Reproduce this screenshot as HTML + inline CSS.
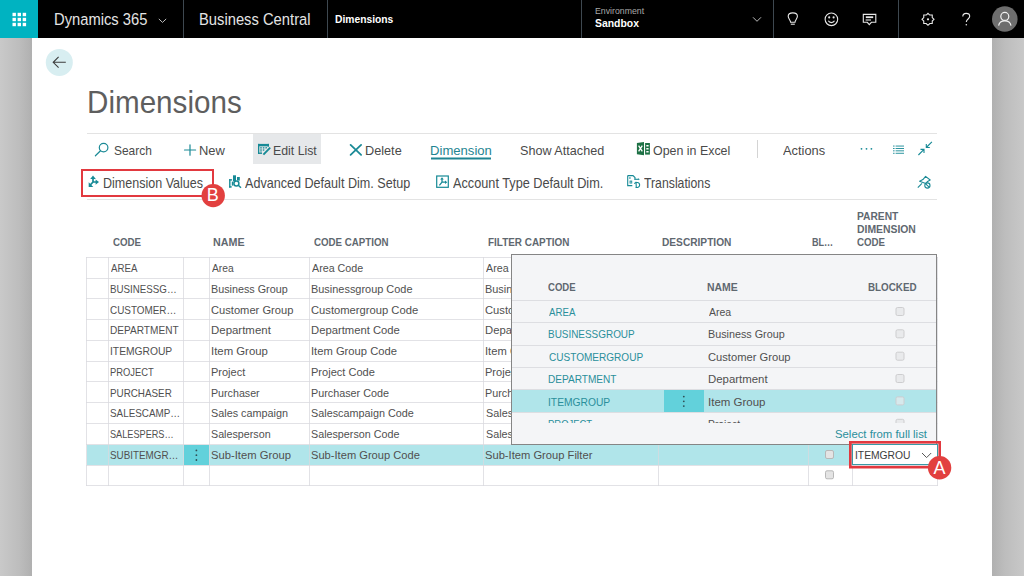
<!DOCTYPE html>
<html><head><meta charset="utf-8">
<style>
*{margin:0;padding:0;box-sizing:border-box}
html,body{width:1024px;height:576px;overflow:hidden;background:#fff;font-family:"Liberation Sans",sans-serif;color:#333}
.abs{position:absolute}
.t{position:absolute;white-space:nowrap;transform-origin:0 0}
svg{position:absolute;overflow:visible}
</style></head>
<body>
<!-- side strips -->
<div class="abs" style="left:0;top:38px;width:32px;height:538px;background:linear-gradient(90deg,#c9c9c9 0%,#bdbdbd 60%,#b0b0b0 100%)"></div>
<div class="abs" style="left:992px;top:38px;width:32px;height:538px;background:linear-gradient(90deg,#b0b0b0 0%,#bdbdbd 40%,#c8c8c8 100%)"></div>

<!-- top bar -->
<div class="abs" style="left:0;top:0;width:1024px;height:38px;background:#000"></div>
<div class="abs" style="left:0;top:0;width:38px;height:38px;background:#00b3c1"></div>
<svg style="left:0;top:0" width="1024" height="38" viewBox="0 0 1024 38">
  <g fill="#fff">
    <rect x="12.5" y="12.8" width="3.4" height="3.4"/><rect x="17.6" y="12.8" width="3.4" height="3.4"/><rect x="22.7" y="12.8" width="3.4" height="3.4"/>
    <rect x="12.5" y="17.8" width="3.4" height="3.4"/><rect x="17.6" y="17.8" width="3.4" height="3.4"/><rect x="22.7" y="17.8" width="3.4" height="3.4"/>
    <rect x="12.5" y="22.8" width="3.4" height="3.4"/><rect x="17.6" y="22.8" width="3.4" height="3.4"/><rect x="22.7" y="22.8" width="3.4" height="3.4"/>
  </g>
  <g stroke="#bdbdbd" stroke-width="1" fill="none">
    <path d="M158.8 18.9 L162.5 22.4 L166.2 18.9"/>
    <path d="M753 17.3 L757 21.3 L761 17.3"/>
  </g>
  <g fill="#3e4850">
    <rect x="183" y="0" width="1" height="38"/>
    <rect x="327" y="0" width="1" height="38"/>
    <rect x="581" y="0" width="1" height="38"/>
    <rect x="773" y="0" width="1" height="38"/>
    <rect x="898" y="0" width="1" height="38"/>
  </g>
  <g stroke="#e8e8e8" stroke-width="1.1" fill="none">
    <!-- bulb -->
    <path d="M790.6 22.3 C790.6 20 788.2 18.8 788.2 16.3 C788.2 14.2 790.2 12.9 792.8 12.9 C795.4 12.9 797.4 14.2 797.4 16.3 C797.4 18.8 795 20 795 22.3 Z"/>
    <path d="M790.8 24.2 L794.8 24.2"/>
    <!-- smiley -->
    <circle cx="831.4" cy="19.3" r="6.3"/>
    <path d="M828.3 20.8 C829.5 23.2 833.3 23.2 834.5 20.8"/>
    <circle cx="829.2" cy="17.4" r="0.5"/><circle cx="833.6" cy="17.4" r="0.5"/>
    <!-- chat -->
    <path d="M863.3 14.4 L875.8 14.4 L875.8 22.3 L871.4 22.3 L869.3 24.6 L867.3 22.3 L863.3 22.3 Z"/>
    <path d="M865.8 17.2 L873.2 17.2" stroke-width="1.8"/><path d="M865.6 20 L871 20"/>
    <!-- gear -->
    <path d="M928.00 13.30 L929.76 15.05 L932.24 15.06 L932.25 17.54 L934.00 19.30 L932.25 21.06 L932.24 23.54 L929.76 23.55 L928.00 25.30 L926.24 23.55 L923.76 23.54 L923.75 21.06 L922.00 19.30 L923.75 17.54 L923.76 15.06 L926.24 15.05 Z"/>
    <!-- help -->
    <path d="M962.8 16.5 C962.8 14.5 964.2 13.4 966.2 13.4 C968.2 13.4 969.7 14.5 969.7 16.3 C969.7 18.8 966.3 19.2 966.3 22"/>
  </g>
  <circle cx="966.3" cy="24.8" r="0.8" fill="#e8e8e8"/><circle cx="928" cy="19.3" r="1.1" fill="#e8e8e8"/>
  <circle cx="1004.8" cy="19" r="12.8" fill="#6e6e6e"/>
  <g stroke="#f2f2f2" stroke-width="1.2" fill="none">
    <circle cx="1004.8" cy="16.4" r="4"/>
    <path d="M998.6 25.6 C999.2 22.6 1001.6 20.9 1004.8 20.9 C1008 20.9 1010.4 22.6 1011 25.6"/>
  </g>
</svg>
<div class="t" style="left:54.12px;top:12.35px;font-size:15.82px;line-height:15.82px;color:#e4e4e4;font-weight:normal;transform:scaleX(0.9326);">Dynamics 365</div>
<div class="t" style="left:199.32px;top:12.35px;font-size:15.82px;line-height:15.82px;color:#e4e4e4;font-weight:normal;transform:scaleX(0.9331);">Business Central</div>
<div class="t" style="left:335.33px;top:13.40px;font-size:11.76px;line-height:11.76px;color:#fff;font-weight:bold;transform:scaleX(0.8750);">Dimensions</div>
<div class="t" style="left:594.90px;top:6.73px;font-size:8.43px;line-height:8.43px;color:#a8a8a8;font-weight:normal;transform:scaleX(1.0380);">Environment</div>
<div class="t" style="left:594.74px;top:18.27px;font-size:11.33px;line-height:11.33px;color:#fff;font-weight:bold;transform:scaleX(0.9182);">Sandbox</div>

<!-- base page svg -->
<svg style="left:0;top:0" width="1024" height="576" viewBox="0 0 1024 576">
  <circle cx="59.3" cy="62.4" r="13.5" fill="#d8eef1"/>
  <g stroke="#3c3c3c" stroke-width="1.1" fill="none">
    <path d="M53.2 62.3 L65.8 62.3 M58.6 56.9 L53.2 62.3 L58.6 67.7"/>
  </g>
  <!-- toolbar lines -->
  <rect x="87" y="133" width="850" height="1" fill="#e3e3e3"/>
  <rect x="87" y="199" width="850" height="1" fill="#e3e3e3"/>
  <rect x="253" y="134" width="68" height="30" fill="#e6e8ea"/>
  <rect x="431" y="157.5" width="60" height="2" fill="#1f8592"/>
  <rect x="757" y="140" width="1" height="18" fill="#d4d4d4"/>
  <!-- toolbar icons -->
  <g stroke="#1b8a96" stroke-width="1.2" fill="none" stroke-linecap="round">
    <circle cx="103.6" cy="147.6" r="4.3"/>
    <path d="M100.5 150.8 L95.4 155.8"/>
    <path d="M190 144.8 L190 155.2 M184.5 150 L195.6 150"/>
    <path d="M350.6 144.9 L361.1 154.8 M361.1 144.9 L350.6 154.8" stroke-width="1.8"/>
  </g>
  <!-- edit list icon -->
  <g fill="#178a96">
    <rect x="258" y="143.9" width="11" height="2.4"/>
    <rect x="258" y="143.9" width="1.3" height="10"/>
    <rect x="258" y="152.6" width="4" height="1.3"/>
    <rect x="267.7" y="143.9" width="1.3" height="3"/>
    <rect x="260.2" y="147.2" width="1.6" height="1.3"/><rect x="262.8" y="147.2" width="1.6" height="1.3"/><rect x="265.4" y="147.2" width="1.6" height="1.3"/>
    <rect x="260.2" y="149.4" width="1.6" height="1.3"/><rect x="262.8" y="149.4" width="1.6" height="1.3"/>
    <rect x="260.2" y="151.5" width="1.6" height="0.9"/>
  </g>
  <path d="M263.2 154.3 L269.8 147.7" stroke="#e6e8ea" stroke-width="3.2"/>
  <path d="M263.4 154.6 L270.2 147.6" stroke="#178a96" stroke-width="1.9"/>
  <!-- excel -->
  <path d="M636.9 143 L644 142 L644 155.2 L636.9 154.2 Z" fill="#1e7145"/>
  <rect x="645.1" y="143" width="4.8" height="11.6" fill="#1e7145"/>
  <path d="M638.6 145.6 L642.3 151.4 M642.3 145.6 L638.6 151.4" stroke="#fff" stroke-width="1.3"/>
  <g fill="#fff"><rect x="646.3" y="145" width="2.3" height="1.5"/><rect x="646.3" y="148" width="2.3" height="1.5"/><rect x="646.3" y="151" width="2.3" height="1.5"/></g>
  <!-- dots list collapse -->
  <g fill="#178a96"><circle cx="861.5" cy="148.8" r="0.9"/><circle cx="866.5" cy="148.8" r="0.9"/><circle cx="871.4" cy="148.8" r="0.9"/></g>
  <g fill="#178a96">
    <rect x="895.6" y="145.6" width="8.4" height="0.9"/><rect x="895.6" y="148" width="8.4" height="0.9"/><rect x="895.6" y="150.4" width="8.4" height="0.9"/><rect x="895.6" y="152.8" width="8.4" height="0.9"/>
    <rect x="893" y="145.6" width="1.6" height="0.9"/><rect x="893" y="148" width="1.6" height="0.9"/><rect x="893" y="150.4" width="1.6" height="0.9"/><rect x="893" y="152.8" width="1.6" height="0.9"/>
  </g>
  <g stroke="#178a96" stroke-width="1.1" fill="none">
    <path d="M918.4 155 L924 149.4 M920.5 149.4 L924 149.4 L924 152.9"/>
    <path d="M931.9 141.9 L926.3 147.5 M926.3 144 L926.3 147.5 L929.8 147.5"/>
  </g>
  <!-- row 2 icons -->
  <g stroke="#178a96" stroke-width="1.7" fill="none">
    <path d="M93 182 L93 177.5 M93 182 L96.8 182 M93 182 L89.8 185.5"/>
  </g>
  <g fill="#178a96">
    <path d="M90.2 178.9 L93 175.6 L95.8 178.9 Z"/>
    <path d="M95.6 179.6 L99 182 L95.6 184.7 Z"/>
    <path d="M88.7 182.2 L88.7 186.9 L93.3 186.9 Z"/>
  </g>
  <!-- advanced -->
  <g fill="#178a96">
    <rect x="233" y="175.3" width="3" height="6"/>
    <rect x="237" y="177" width="2.8" height="3.6"/>
    <rect x="229.1" y="179.2" width="3" height="1.4"/>
    <rect x="229.1" y="179.2" width="1.4" height="8.4"/>
    <rect x="229.1" y="186.2" width="2.6" height="1.4"/>
    <rect x="231.8" y="181.6" width="1.5" height="4"/>
  </g>
  <circle cx="236.4" cy="183.4" r="2.5" fill="#fff" stroke="#178a96" stroke-width="1.5"/>
  <path d="M238.3 185.3 L241 187.8" stroke="#178a96" stroke-width="1.5"/>
  <!-- account type -->
  <rect x="436.7" y="176" width="11.6" height="11.3" fill="none" stroke="#178a96" stroke-width="1.2"/>
  <g stroke="#178a96" stroke-width="1.3" fill="none"><path d="M439.4 185.3 L442 182.2 L446 182.2 M442 182.2 L442 179"/></g>
  <g fill="#178a96"><path d="M440.2 179.6 L442 177.3 L443.8 179.6 Z"/><path d="M445 180.5 L447.3 182.2 L445 183.9 Z"/></g>
  <!-- translations -->
  <g stroke="#178a96" stroke-width="1.1" fill="none">
    <path d="M627.7 175.6 L633 175.6 L635 177.6 L635 179 M627.7 175.6 L627.7 185.6 L632.3 185.6"/>
    <path d="M634.2 179.3 L638.6 179.3"/>
    <path d="M634.3 183.6 C636 181.6 640 182.3 639.6 185.3 C639.3 187.2 637.3 187.7 635.6 187.4"/>
    <path d="M636 181.8 L636.3 187.5"/>
  </g>
  <g fill="#178a96">
    <rect x="629.2" y="177.3" width="1.4" height="1.4"/>
    <rect x="629.6" y="180.6" width="2.6" height="2.9"/>
    <path d="M638.2 178.3 L639.8 179.3 L638.2 180.3 Z"/>
  </g>
  <rect x="630.4" y="181.6" width="1" height="1" fill="#fff"/>
  <!-- pin -->
  <g stroke="#1b8a96" stroke-width="1.1" fill="none" stroke-linejoin="round">
    <path d="M925.6 176.4 L930.2 180 L927.6 181.4 L925.8 183.6 L919.6 181.2 L922.9 179.6 Z"/>
    <path d="M922 183.3 L917.8 187.6"/>
    <circle cx="927.4" cy="185.5" r="2.6" fill="#fff"/>
    <path d="M925.7 183.8 L929.1 187.2"/>
  </g>

  <!-- grid -->
  <rect x="87" y="445" width="850" height="20" fill="#b0e5ea"/>
  <rect x="184" y="445" width="25" height="20" fill="#62d1db"/>
  <g fill="#d8d8de" fill-opacity="0.75">
    <rect x="86" y="257" width="852" height="1"/>
    <rect x="86" y="278" width="852" height="1"/>
    <rect x="86" y="298" width="852" height="1"/>
    <rect x="86" y="319" width="852" height="1"/>
    <rect x="86" y="340" width="852" height="1"/>
    <rect x="86" y="361" width="852" height="1"/>
    <rect x="86" y="381" width="852" height="1"/>
    <rect x="86" y="402" width="852" height="1"/>
    <rect x="86" y="423" width="852" height="1"/>
    <rect x="86" y="444" width="852" height="1"/>
    <rect x="86" y="465" width="852" height="1"/>
    <rect x="86" y="485" width="852" height="1"/>
    <rect x="86" y="257" width="1" height="229"/>
    <rect x="108" y="257" width="1" height="229"/>
    <rect x="183" y="257" width="1" height="229"/>
    <rect x="209" y="257" width="1" height="229"/>
    <rect x="309" y="257" width="1" height="229"/>
    <rect x="483" y="257" width="1" height="229"/>
    <rect x="658" y="257" width="1" height="229"/>
    <rect x="808" y="257" width="1" height="229"/>
    <rect x="852" y="257" width="1" height="229"/>
    <rect x="937" y="257" width="1" height="229"/>
  </g>
  <g fill="#2f4f55"><circle cx="196.4" cy="450.4" r="0.9"/><circle cx="196.4" cy="455.2" r="0.9"/><circle cx="196.4" cy="460" r="0.9"/></g>
  <g fill="#e4e4e4" stroke="#b8b8b8" stroke-width="1">
    <rect x="825.5" y="450.5" width="8" height="8" rx="1.5"/>
    <rect x="825.5" y="470.8" width="8" height="8" rx="1.5"/>
  </g>
</svg>
<div class="t" style="left:86.73px;top:85.53px;font-size:32.20px;line-height:32.20px;color:#5e5e5e;font-weight:normal;transform:scaleX(0.9203);">Dimensions</div>
<div class="t" style="left:114.26px;top:144.56px;font-size:12.63px;line-height:12.63px;color:#4a4a4a;font-weight:normal;transform:scaleX(0.9461);">Search</div>
<div class="t" style="left:199.46px;top:144.56px;font-size:12.63px;line-height:12.63px;color:#4a4a4a;font-weight:normal;transform:scaleX(1.0248);">New</div>
<div class="t" style="left:273.21px;top:144.56px;font-size:12.63px;line-height:12.63px;color:#4a4a4a;font-weight:normal;transform:scaleX(0.9751);">Edit List</div>
<div class="t" style="left:364.98px;top:144.56px;font-size:12.63px;line-height:12.63px;color:#4a4a4a;font-weight:normal;transform:scaleX(1.0061);">Delete</div>
<div class="t" style="left:429.95px;top:144.56px;font-size:12.63px;line-height:12.63px;color:#1f8592;font-weight:normal;transform:scaleX(1.0380);">Dimension</div>
<div class="t" style="left:519.83px;top:144.56px;font-size:12.63px;line-height:12.63px;color:#4a4a4a;font-weight:normal;transform:scaleX(0.9995);">Show Attached</div>
<div class="t" style="left:652.84px;top:144.56px;font-size:12.63px;line-height:12.63px;color:#4a4a4a;font-weight:normal;transform:scaleX(0.9832);">Open in Excel</div>
<div class="t" style="left:783.00px;top:144.56px;font-size:12.63px;line-height:12.63px;color:#4a4a4a;font-weight:normal;transform:scaleX(1.0174);">Actions</div>
<div class="t" style="left:103.00px;top:176.58px;font-size:13.79px;line-height:13.79px;color:#4a4a4a;font-weight:normal;transform:scaleX(0.9092);">Dimension Values</div>
<div class="t" style="left:244.90px;top:176.58px;font-size:13.79px;line-height:13.79px;color:#4a4a4a;font-weight:normal;transform:scaleX(0.9137);">Advanced Default Dim. Setup</div>
<div class="t" style="left:452.50px;top:176.58px;font-size:13.79px;line-height:13.79px;color:#4a4a4a;font-weight:normal;transform:scaleX(0.9224);">Account Type Default Dim.</div>
<div class="t" style="left:643.75px;top:176.58px;font-size:13.79px;line-height:13.79px;color:#4a4a4a;font-weight:normal;transform:scaleX(0.8896);">Translations</div>
<div class="t" style="left:112.91px;top:236.52px;font-size:11.04px;line-height:11.04px;color:#5f6870;font-weight:bold;transform:scaleX(0.8794);">CODE</div>
<div class="t" style="left:212.70px;top:236.52px;font-size:11.04px;line-height:11.04px;color:#5f6870;font-weight:bold;transform:scaleX(0.9720);">NAME</div>
<div class="t" style="left:313.51px;top:236.52px;font-size:11.04px;line-height:11.04px;color:#5f6870;font-weight:bold;transform:scaleX(0.8807);">CODE CAPTION</div>
<div class="t" style="left:487.85px;top:236.52px;font-size:11.04px;line-height:11.04px;color:#5f6870;font-weight:bold;transform:scaleX(0.9001);">FILTER CAPTION</div>
<div class="t" style="left:662.04px;top:236.52px;font-size:11.04px;line-height:11.04px;color:#5f6870;font-weight:bold;transform:scaleX(0.9205);">DESCRIPTION</div>
<div class="t" style="left:812.01px;top:236.52px;font-size:11.04px;line-height:11.04px;color:#5f6870;font-weight:bold;transform:scaleX(0.8228);">BL…</div>
<div class="t" style="left:856.73px;top:211.45px;font-size:11.47px;line-height:11.47px;color:#5f6870;font-weight:bold;transform:scaleX(0.8921);">PARENT</div>
<div class="t" style="left:856.72px;top:224.25px;font-size:11.47px;line-height:11.47px;color:#5f6870;font-weight:bold;transform:scaleX(0.9054);">DIMENSION</div>
<div class="t" style="left:857.01px;top:236.52px;font-size:11.04px;line-height:11.04px;color:#5f6870;font-weight:bold;transform:scaleX(0.8794);">CODE</div>
<div class="t" style="left:110.70px;top:262.04px;font-size:11.60px;line-height:11.60px;color:#505050;font-weight:normal;transform:scaleX(0.8348);">AREA</div>
<div class="t" style="left:211.60px;top:262.04px;font-size:11.60px;line-height:11.60px;color:#505050;font-weight:normal;transform:scaleX(0.8840);">Area</div>
<div class="t" style="left:311.60px;top:262.04px;font-size:11.60px;line-height:11.60px;color:#505050;font-weight:normal;transform:scaleX(0.9222);">Area Code</div>
<div class="t" style="left:109.92px;top:282.79px;font-size:11.60px;line-height:11.60px;color:#505050;font-weight:normal;transform:scaleX(0.8412);">BUSINESSG…</div>
<div class="t" style="left:210.74px;top:282.79px;font-size:11.60px;line-height:11.60px;color:#505050;font-weight:normal;transform:scaleX(0.9294);">Business Group</div>
<div class="t" style="left:310.73px;top:282.79px;font-size:11.60px;line-height:11.60px;color:#505050;font-weight:normal;transform:scaleX(0.9427);">Businessgroup Code</div>
<div class="t" style="left:110.20px;top:303.54px;font-size:11.60px;line-height:11.60px;color:#505050;font-weight:normal;transform:scaleX(0.8543);">CUSTOMER…</div>
<div class="t" style="left:211.04px;top:303.54px;font-size:11.60px;line-height:11.60px;color:#505050;font-weight:normal;transform:scaleX(0.9612);">Customer Group</div>
<div class="t" style="left:311.04px;top:303.54px;font-size:11.60px;line-height:11.60px;color:#505050;font-weight:normal;transform:scaleX(0.9668);">Customergroup Code</div>
<div class="t" style="left:109.89px;top:324.29px;font-size:11.60px;line-height:11.60px;color:#505050;font-weight:normal;transform:scaleX(0.8703);">DEPARTMENT</div>
<div class="t" style="left:210.68px;top:324.29px;font-size:11.60px;line-height:11.60px;color:#505050;font-weight:normal;transform:scaleX(0.9875);">Department</div>
<div class="t" style="left:310.70px;top:324.29px;font-size:11.60px;line-height:11.60px;color:#505050;font-weight:normal;transform:scaleX(0.9706);">Department Code</div>
<div class="t" style="left:109.77px;top:345.04px;font-size:11.60px;line-height:11.60px;color:#505050;font-weight:normal;transform:scaleX(0.8863);">ITEMGROUP</div>
<div class="t" style="left:210.58px;top:345.04px;font-size:11.60px;line-height:11.60px;color:#505050;font-weight:normal;transform:scaleX(0.9805);">Item Group</div>
<div class="t" style="left:310.59px;top:345.04px;font-size:11.60px;line-height:11.60px;color:#505050;font-weight:normal;transform:scaleX(0.9662);">Item Group Code</div>
<div class="t" style="left:109.95px;top:365.79px;font-size:11.60px;line-height:11.60px;color:#505050;font-weight:normal;transform:scaleX(0.8099);">PROJECT</div>
<div class="t" style="left:210.72px;top:365.79px;font-size:11.60px;line-height:11.60px;color:#505050;font-weight:normal;transform:scaleX(0.9476);">Project</div>
<div class="t" style="left:310.72px;top:365.79px;font-size:11.60px;line-height:11.60px;color:#505050;font-weight:normal;transform:scaleX(0.9520);">Project Code</div>
<div class="t" style="left:109.91px;top:386.54px;font-size:11.60px;line-height:11.60px;color:#505050;font-weight:normal;transform:scaleX(0.8485);">PURCHASER</div>
<div class="t" style="left:210.75px;top:386.54px;font-size:11.60px;line-height:11.60px;color:#505050;font-weight:normal;transform:scaleX(0.9210);">Purchaser</div>
<div class="t" style="left:310.74px;top:386.54px;font-size:11.60px;line-height:11.60px;color:#505050;font-weight:normal;transform:scaleX(0.9306);">Purchaser Code</div>
<div class="t" style="left:110.26px;top:407.29px;font-size:11.60px;line-height:11.60px;color:#505050;font-weight:normal;transform:scaleX(0.8505);">SALESCAMP…</div>
<div class="t" style="left:211.11px;top:407.29px;font-size:11.60px;line-height:11.60px;color:#505050;font-weight:normal;transform:scaleX(0.9335);">Sales campaign</div>
<div class="t" style="left:311.11px;top:407.29px;font-size:11.60px;line-height:11.60px;color:#505050;font-weight:normal;transform:scaleX(0.9326);">Salescampaign Code</div>
<div class="t" style="left:110.29px;top:428.04px;font-size:11.60px;line-height:11.60px;color:#505050;font-weight:normal;transform:scaleX(0.7898);">SALESPERS…</div>
<div class="t" style="left:211.12px;top:428.04px;font-size:11.60px;line-height:11.60px;color:#505050;font-weight:normal;transform:scaleX(0.9248);">Salesperson</div>
<div class="t" style="left:311.12px;top:428.04px;font-size:11.60px;line-height:11.60px;color:#505050;font-weight:normal;transform:scaleX(0.9265);">Salesperson Code</div>
<div class="t" style="left:110.26px;top:448.79px;font-size:11.60px;line-height:11.60px;color:#505050;font-weight:normal;transform:scaleX(0.8500);">SUBITEMGR…</div>
<div class="t" style="left:211.09px;top:448.79px;font-size:11.60px;line-height:11.60px;color:#505050;font-weight:normal;transform:scaleX(0.9690);">Sub-Item Group</div>
<div class="t" style="left:311.10px;top:448.79px;font-size:11.60px;line-height:11.60px;color:#505050;font-weight:normal;transform:scaleX(0.9602);">Sub-Item Group Code</div>
<div class="t" style="left:485.00px;top:448.79px;font-size:11.60px;line-height:11.60px;color:#505050;font-weight:normal;transform:scaleX(0.9634);">Sub-Item Group Filter</div>
<div class="abs" style="left:484px;top:258px;width:27px;height:186px;overflow:hidden">
  <div class="abs" style="left:-484px;top:-258px;width:1024px;height:576px"><div class="t" style="left:486.00px;top:262.04px;font-size:11.60px;line-height:11.60px;color:#505050;font-weight:normal;transform:scaleX(0.9222);">Area Filter</div>
<div class="t" style="left:485.13px;top:282.79px;font-size:11.60px;line-height:11.60px;color:#505050;font-weight:normal;transform:scaleX(0.9427);">Businessgroup Filter</div>
<div class="t" style="left:485.44px;top:303.54px;font-size:11.60px;line-height:11.60px;color:#505050;font-weight:normal;transform:scaleX(0.9668);">Customergroup Filter</div>
<div class="t" style="left:485.10px;top:324.29px;font-size:11.60px;line-height:11.60px;color:#505050;font-weight:normal;transform:scaleX(0.9706);">Department Filter</div>
<div class="t" style="left:484.99px;top:345.04px;font-size:11.60px;line-height:11.60px;color:#505050;font-weight:normal;transform:scaleX(0.9662);">Item Group Filter</div>
<div class="t" style="left:485.12px;top:365.79px;font-size:11.60px;line-height:11.60px;color:#505050;font-weight:normal;transform:scaleX(0.9520);">Project Filter</div>
<div class="t" style="left:485.14px;top:386.54px;font-size:11.60px;line-height:11.60px;color:#505050;font-weight:normal;transform:scaleX(0.9306);">Purchaser Filter</div>
<div class="t" style="left:485.51px;top:407.29px;font-size:11.60px;line-height:11.60px;color:#505050;font-weight:normal;transform:scaleX(0.9326);">Salescampaign Filter</div>
<div class="t" style="left:485.52px;top:428.04px;font-size:11.60px;line-height:11.60px;color:#505050;font-weight:normal;transform:scaleX(0.9265);">Salesperson Filter</div></div>
</div>

<!-- popup -->
<div class="abs" style="left:511px;top:254px;width:426px;height:191px;background:#f4f5f7;border:1px solid #858585;overflow:hidden">
  <div class="abs" style="left:-512px;top:-255px;width:1024px;height:576px">
    <svg style="left:0;top:0" width="1024" height="576" viewBox="0 0 1024 576">
      <g fill="#dddee2">
        <rect x="512" y="300" width="424" height="1"/>
        <rect x="512" y="322" width="424" height="1"/>
        <rect x="512" y="345" width="424" height="1"/>
        <rect x="512" y="367" width="424" height="1"/>
        <rect x="512" y="389" width="424" height="1"/>
        <rect x="512" y="412" width="424" height="1"/>
      </g>
      <rect x="512" y="390" width="424" height="22" fill="#b0e5ea"/>
      <rect x="664" y="390" width="40" height="22" fill="#62d1db"/>
      <g fill="#2f4f55"><circle cx="683.8" cy="396.6" r="0.9"/><circle cx="683.8" cy="401.3" r="0.9"/><circle cx="683.8" cy="406.1" r="0.9"/></g>
      <g fill="#e9eaec" stroke="#cdcdcf" stroke-width="1">
        <rect x="896" y="307.5" width="8" height="8" rx="1.5"/>
        <rect x="896" y="329.8" width="8" height="8" rx="1.5"/>
        <rect x="896" y="352.2" width="8" height="8" rx="1.5"/>
        <rect x="896" y="374.5" width="8" height="8" rx="1.5"/>
        <rect x="896" y="396.9" width="8" height="8" rx="1.5" fill="#d6e9ec"/>
      </g>
    </svg>
    <div class="t" style="left:548.22px;top:282.06px;font-size:10.75px;line-height:10.75px;color:#5f6870;font-weight:bold;transform:scaleX(0.8899);">CODE</div>
<div class="t" style="left:707.42px;top:282.06px;font-size:10.75px;line-height:10.75px;color:#5f6870;font-weight:bold;transform:scaleX(0.9721);">NAME</div>
<div class="t" style="left:867.96px;top:282.06px;font-size:10.75px;line-height:10.75px;color:#5f6870;font-weight:bold;transform:scaleX(0.9126);">BLOCKED</div>
<div class="t" style="left:549.00px;top:306.14px;font-size:11.60px;line-height:11.60px;color:#2a8f9b;font-weight:normal;transform:scaleX(0.8348);">AREA</div>
<div class="t" style="left:709.00px;top:306.14px;font-size:11.60px;line-height:11.60px;color:#505050;font-weight:normal;transform:scaleX(0.9064);">Area</div>
<div class="t" style="left:548.20px;top:328.49px;font-size:11.60px;line-height:11.60px;color:#2a8f9b;font-weight:normal;transform:scaleX(0.8568);">BUSINESSGROUP</div>
<div class="t" style="left:708.14px;top:328.49px;font-size:11.60px;line-height:11.60px;color:#505050;font-weight:normal;transform:scaleX(0.9294);">Business Group</div>
<div class="t" style="left:548.50px;top:350.84px;font-size:11.60px;line-height:11.60px;color:#2a8f9b;font-weight:normal;transform:scaleX(0.8659);">CUSTOMERGROUP</div>
<div class="t" style="left:708.44px;top:350.84px;font-size:11.60px;line-height:11.60px;color:#505050;font-weight:normal;transform:scaleX(0.9636);">Customer Group</div>
<div class="t" style="left:548.19px;top:373.19px;font-size:11.60px;line-height:11.60px;color:#2a8f9b;font-weight:normal;transform:scaleX(0.8690);">DEPARTMENT</div>
<div class="t" style="left:708.09px;top:373.19px;font-size:11.60px;line-height:11.60px;color:#505050;font-weight:normal;transform:scaleX(0.9842);">Department</div>
<div class="t" style="left:548.07px;top:395.54px;font-size:11.60px;line-height:11.60px;color:#2a8f9b;font-weight:normal;transform:scaleX(0.8863);">ITEMGROUP</div>
<div class="t" style="left:707.97px;top:395.54px;font-size:11.60px;line-height:11.60px;color:#505050;font-weight:normal;transform:scaleX(0.9911);">Item Group</div>
<div class="t" style="left:834.79px;top:429.36px;font-size:10.75px;line-height:10.75px;color:#2a8f9b;font-weight:normal;transform:scaleX(1.0542);">Select from full list</div>
    <div class="abs" style="left:512px;top:413px;width:424px;height:10px;overflow:hidden">
      <div class="abs" style="left:-512px;top:-413px;width:1024px;height:576px">
        <svg style="left:0;top:0" width="1024" height="576" viewBox="0 0 1024 576">
          <rect x="896" y="419.3" width="8" height="8" rx="1.5" fill="#e9eaec" stroke="#cdcdcf" stroke-width="1"/>
        </svg>
        <div class="t" style="left:548.24px;top:417.89px;font-size:11.60px;line-height:11.60px;color:#2a8f9b;font-weight:normal;transform:scaleX(0.8150);">PROJECT</div>
<div class="t" style="left:708.17px;top:417.89px;font-size:11.60px;line-height:11.60px;color:#505050;font-weight:normal;transform:scaleX(0.8900);">Project</div>
      </div>
    </div>
  </div>
</div>

<!-- input -->
<div class="abs" style="left:852px;top:444px;width:86px;height:21px;background:#fff;border:1px solid #3a9aa6"></div>
<svg style="left:0;top:0" width="1024" height="576" viewBox="0 0 1024 576">
  <path d="M922 453 L926.6 457.6 L931.2 453" stroke="#555" stroke-width="1" fill="none"/>
</svg>
<div class="t" style="left:854.67px;top:450.17px;font-size:11.80px;line-height:11.80px;color:#3c3c3c;font-weight:normal;transform:scaleX(0.8732);">ITEMGROU</div>

<!-- red annotations -->
<div class="abs" style="left:81px;top:169px;width:133px;height:28px;border:2px solid #e2393f"></div>
<svg style="left:0;top:0" width="1024" height="576" viewBox="0 0 1024 576"><rect x="850.3" y="442.3" width="89.4" height="24.9" fill="none" stroke="#e2393f" stroke-width="2.6"/></svg>
<svg style="left:0;top:0" width="1024" height="576" viewBox="0 0 1024 576">
  <circle cx="213.2" cy="195.6" r="11.7" fill="#e2403f"/>
  <circle cx="939.6" cy="467.8" r="11.7" fill="#e2403f"/>
</svg>
<div class="t" style="left:206.8px;top:186.3px;font-size:18px;line-height:18px;color:#fff">B</div>
<div class="t" style="left:933.6px;top:458.5px;font-size:18px;line-height:18px;color:#fff">A</div>
</body></html>
